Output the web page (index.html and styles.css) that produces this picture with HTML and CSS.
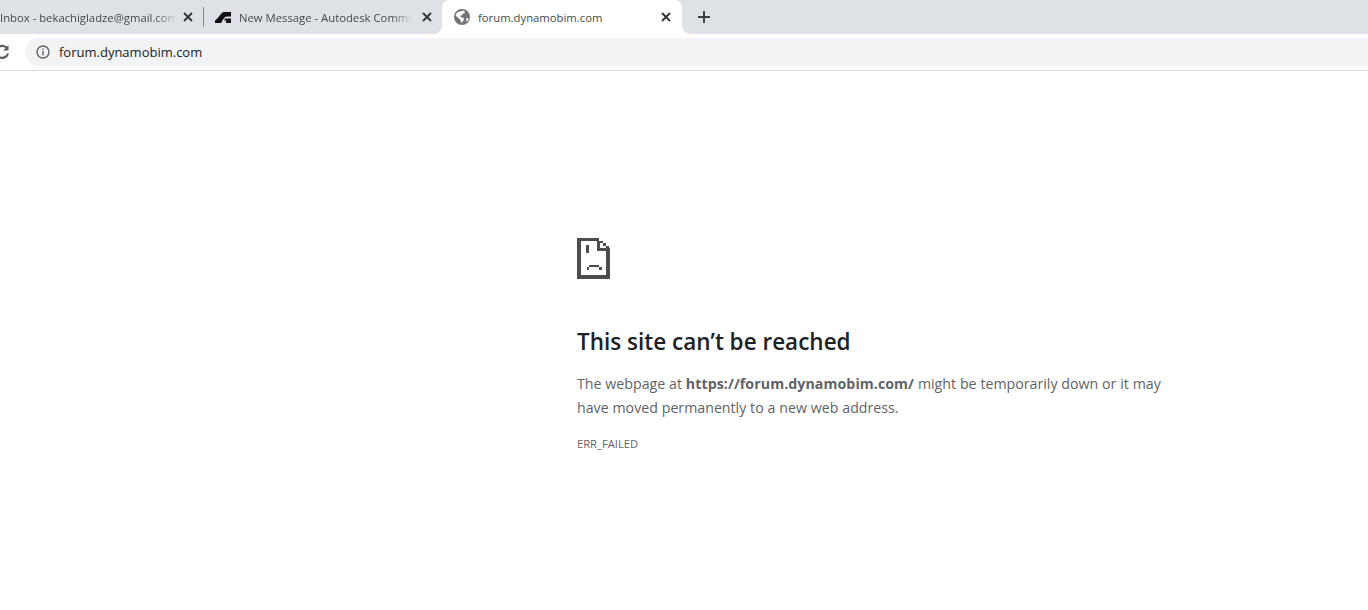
FILE: index.html
```html
<!DOCTYPE html>
<html>

<head>
    <title>forum.dynamobim.com</title>
    <link rel="stylesheet" href="styles.css">
</head>

<body>
    <div class="tabbar">
        <div class="tab tab-first">
            <span class="tab-title faded">Inbox - bekachigladze@gmail.com</span>
            <svg class="close" viewBox="0 0 10 10"><path d="M1 1L9 9M9 1L1 9" /></svg>
        </div>
        <div class="divider"></div>
        <div class="tab tab-second">
            <svg class="favicon" viewBox="0 0 16 16"><path fill="#111" d="M0 11.500C2 10.500 4 7 6 5 7 3.500 8 3 10 3H16V7.500H12C10 7.500 9 9 8 10.500 7 12 6.500 14 6 14H0zM10 9.500H16V14H11V11.500H9z" /></svg>
            <span class="tab-title faded">New Message - Autodesk Community</span>
            <svg class="close" viewBox="0 0 10 10"><path d="M1 1L9 9M9 1L1 9" /></svg>
        </div>
        <div class="tab tab-active">
            <svg class="favicon" viewBox="0 0 16 16"><circle cx="8" cy="8" r="8" fill="#757575" /><path fill="#fff" d="M3 3.500 6 2.500 10 1.500 11 3.500 8.500 5 8 6.500 6 6.500 7 8.500 10 9 9.500 11.500 7.500 14 6.500 11 4.500 9 1.500 6.500zM12 9.500l2.500-.5-.5 2.500-1.500 1z" /></svg>
            <span class="tab-title">forum.dynamobim.com</span>
            <svg class="close" viewBox="0 0 10 10"><path d="M1 1L9 9M9 1L1 9" /></svg>
        </div>
        <svg class="new-tab" viewBox="0 0 12 12"><path d="M6 0V12M0 6H12" /></svg>
    </div>

    <div class="toolbar">
        <svg class="reload" viewBox="0 0 16 16"><path d="M13.500 5A6 6 0 1 0 14 9.500" /><path class="reload-tip" d="M14.500 1v5.500H9z" /></svg>
        <div class="omnibox">
            <svg class="info" viewBox="0 0 14 14">
                <circle cx="7" cy="7" r="6" />
                <path d="M7 6V10.500M7 3.500V5" />
            </svg>
            <span class="url">forum.dynamobim.com</span>
        </div>
    </div>

    <main class="error-page">
        <div class="error-box">
            <svg class="sad-file" width="33" height="41" viewBox="0 0 33 41" shape-rendering="crispEdges">
                <path d="M0 0H22V3H0zM0 3H4V41H0zM4 37H33V41H4zM29 12H33V37H29zM20 3H23V13H20zM23 10H33V13H23zM23 3H26V5H23zM26 5H29V8H26zM29 8H32V11H29z" />
                <path d="M9 7H12V15H9zM12 27H22V29H12zM10 29H12V32H10zM22 29H25V32H22z" />
            </svg>
            <h1>This site can&#8217;t be reached</h1>
            <p>The webpage at <strong>https://forum.dynamobim.com/</strong> might be temporarily down or it may have moved permanently to a new web address.</p>
            <div class="error-code">ERR_FAILED</div>
        </div>
    </main>
</body>

</html>
```

FILE: styles.css
```css
body {
    font-family: 'Open Sans', 'Noto Sans', sans-serif;
    margin: 0;
    padding: 0;
    background-color: #fff;
    overflow: hidden;
}

.tabbar {
    height: 34px;
    background-color: #dee1e6;
    display: flex;
    align-items: center;
    font-size: 11.3px;
    color: #45494d;
}

.tab {
    height: 34px;
    display: flex;
    align-items: center;
    box-sizing: border-box;
}

.tab-first {
    width: 203px;
}

.tab-second {
    width: 238px;
    padding-left: 11px;
}

.tab-active {
    width: 240px;
    padding-left: 12px;
    background-color: #fff;
    border-radius: 8px 8px 0 0;
    color: #45494d;
    position: relative;
}

.tab-active::before,
.tab-active::after {
    content: "";
    position: absolute;
    bottom: 0;
    width: 8px;
    height: 8px;
}

.tab-active::before {
    left: -8px;
    background: radial-gradient(circle at 0 0, #dee1e6 7.5px, #fff 8px);
}

.tab-active::after {
    right: -8px;
    background: radial-gradient(circle at 100% 0, #dee1e6 7.5px, #fff 8px);
}

.tab-title {
    flex: 1;
    white-space: nowrap;
    overflow: hidden;
}

.faded {
    -webkit-mask-image: linear-gradient(to right, #000 88%, transparent);
    mask-image: linear-gradient(to right, #000 88%, transparent);
}

.tab-active .tab-title,
.tab-second .tab-title {
    padding-left: 8px;
}

.favicon {
    width: 16px;
    height: 16px;
    flex: none;
}

.close {
    width: 10px;
    height: 10px;
    flex: none;
    margin: 0 11px 0 9px;
    fill: none;
    stroke: #333;
    stroke-width: 1.8;
}

.tab-first .close {
    margin: 0 10px 0 6px;
}

.tab-second .close {
    margin-right: 10px;
}

.divider {
    width: 1px;
    height: 20px;
    background-color: #80868b;
}

.new-tab {
    width: 12px;
    height: 12px;
    margin-left: 16px;
    fill: none;
    stroke: #3c4043;
    stroke-width: 2;
}

.toolbar {
    height: 36px;
    border-bottom: 1px solid #dadce0;
    display: flex;
    align-items: center;
    padding-left: 25px;
    position: relative;
}

.reload {
    position: absolute;
    left: -6px;
    top: 10px;
    width: 16px;
    height: 16px;
    fill: none;
    stroke: #5f6368;
    stroke-width: 2.3;
}

.reload-tip {
    fill: #5f6368;
    stroke: none;
}

.omnibox {
    flex: 1;
    height: 28px;
    background-color: #f1f3f4;
    border-radius: 14px 0 0 14px;
    display: flex;
    align-items: center;
    padding-left: 11px;
}

.info {
    width: 14px;
    height: 14px;
    fill: none;
    stroke: #5f6368;
    stroke-width: 1.4;
}

.url {
    margin-left: 9px;
    font-size: 13px;
    color: #202124;
}

.error-page {
    padding-top: 167px;
    padding-left: 577px;
}

.error-box {
    width: 600px;
}

.sad-file {
    display: block;
    fill: #4d4d4d;
}

h1 {
    margin: 46px 0 0;
    font-size: 22.5px;
    font-weight: 600;
    line-height: 33px;
    color: #202124;
}

p {
    margin: 14px 0 0;
    font-size: 14.2px;
    line-height: 24px;
    word-spacing: 0.15px;
    color: #5f6368;
    width: 590px;
}

strong {
    font-weight: 700;
    letter-spacing: 0.07px;
}

.error-code {
    margin-top: 16px;
    font-size: 11.2px;
    line-height: 16px;
    color: #5f6368;
}
```
